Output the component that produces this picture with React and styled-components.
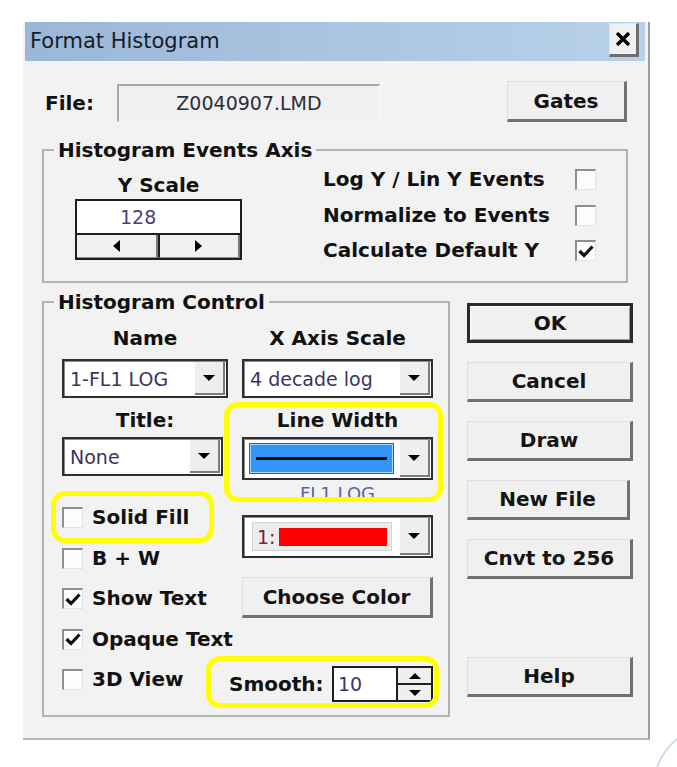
import React from 'react';
import styled, { createGlobalStyle, css } from 'styled-components';

const GlobalStyle = createGlobalStyle`
  html, body {
    margin: 0;
    padding: 0;
    background: #ffffff;
  }
  body {
    font-family: "DejaVu Sans", "Liberation Sans", sans-serif;
  }
  * {
    box-sizing: border-box;
  }
`;

const Page = styled.div`
  position: relative;
  width: 677px;
  height: 767px;
  overflow: hidden;
  padding: 22px 0 0 23px;
`;

const Window = styled.div`
  width: 627px;
  height: 718px;
  background: #f2f2f2;
  border-right: 2px solid #9c9c9c;
  border-bottom: 2px solid #b6b6b6;
`;

const TitleBar = styled.div`
  display: flex;
  align-items: flex-start;
  justify-content: space-between;
  margin-left: 2px;
  width: 620px;
  height: 39px;
  background: linear-gradient(90deg, #9bb7d7 0%, #adc7e3 60%, #b9d1ea 100%);
`;

const TitleText = styled.div`
  padding-left: 5px;
  font: 21px/39px "DejaVu Sans", sans-serif;
  color: #161c28;
`;

const CloseButton = styled.div`
  display: flex;
  align-items: center;
  justify-content: center;
  width: 30px;
  height: 34px;
  margin: 1px 6px 0 0;
  background: #f0f0f0;
  border-style: solid;
  border-width: 1px 3px 3px 1px;
  border-color: #e4e4e4 #6e6e6e #6e6e6e #e4e4e4;
`;

const Body = styled.div`
  padding-left: 19px;
`;

const FileRow = styled.div`
  display: flex;
  align-items: flex-end;
  margin-top: 20px;
  padding-left: 3px;
`;

const FieldLabel = styled.div`
  width: 72px;
  font: bold 20px/38px "DejaVu Sans", sans-serif;
  color: #111;
`;

const FileField = styled.div`
  width: 263px;
  height: 38px;
  background: #f0f0f0;
  border-style: solid;
  border-width: 2px 1px 1px 2px;
  border-color: #a9a9a9 #fafafa #fafafa #a9a9a9;
  text-align: center;
  font: 19px/34px "DejaVu Sans", sans-serif;
  color: #2c2c3c;
`;

const Button = styled.div`
  display: flex;
  align-items: center;
  justify-content: center;
  width: ${p => p.$w || 166}px;
  height: ${p => p.$h || 40}px;
  margin-left: ${p => p.$ml || 0}px;
  margin-top: ${p => p.$mt || 0}px;
  background: #f0f0f0;
  border-style: solid;
  border-width: 1px 3px 3px 1px;
  border-color: #dedede #707070 #707070 #dedede;
  font: bold 20px "DejaVu Sans", sans-serif;
  color: #141414;
  white-space: nowrap;
  ${p => p.$default && css`
    border: 3px solid #2b2b2b;
    box-shadow: inset 1px 1px 0 #ffffff, inset -1px -1px 0 #9a9a9a;
  `}
`;

const Group = styled.fieldset`
  margin: ${p => p.$mt || 0}px 0 0 0;
  padding: ${p => p.$pt}px 0 ${p => p.$pb}px 0;
  width: ${p => p.$w}px;
  min-width: 0;
  border: 2px solid #b3b3b3;
`;

const Legend = styled.legend`
  margin-left: 10px;
  padding: 0 4px;
  font: bold 20px/24px "DejaVu Sans", sans-serif;
  color: #111;
`;

const EventsBody = styled.div`
  display: flex;
  align-items: flex-start;
`;

const YColumn = styled.div`
  display: flex;
  flex-direction: column;
  align-items: center;
  width: 167px;
  margin: 5px 0 0 31px;
`;

const Caption = styled.div`
  margin-top: ${p => p.$mt || 0}px;
  text-align: center;
  font: bold 20px/24px "DejaVu Sans", sans-serif;
  color: #111;
`;

const ScrollSpin = styled.div`
  display: flex;
  flex-direction: column;
  width: 167px;
  height: 61px;
  margin-top: 2px;
  background: #fff;
  border: 2px solid #1e1e1e;
`;

const ScrollValue = styled.div`
  height: 34px;
  padding-left: 43px;
  border-bottom: 2px solid #1e1e1e;
  font: 19px/32px "DejaVu Sans", sans-serif;
  color: #4a3f7e;
`;

const ScrollRow = styled.div`
  display: flex;
  flex: 1;
`;

const ScrollButton = styled.div`
  display: flex;
  flex: 1;
  align-items: center;
  justify-content: center;
  background: #f0f0f0;
  border-right: 2px solid #7a7a7a;
  border-bottom: 1px solid #8a8a8a;
  & + & {
    border-left: 2px solid #1e1e1e;
  }
`;

const Arrow = styled.span`
  width: 0;
  height: 0;
  border-style: solid;
  border-color: transparent;
  ${p => p.$dir === 'left' && css`
    border-width: 6px 7px 6px 0;
    border-right-color: #000;
  `}
  ${p => p.$dir === 'right' && css`
    border-width: 6px 0 6px 7px;
    border-left-color: #000;
  `}
  ${p => p.$dir === 'up' && css`
    border-width: 0 6px 6px 6px;
    border-bottom-color: #000;
  `}
  ${p => p.$dir === 'down' && css`
    border-width: 6px 6px 0 6px;
    border-top-color: #000;
  `}
`;

const OptionGrid = styled.div`
  display: grid;
  grid-template-columns: 252px 21px;
  row-gap: 14.5px;
  align-items: center;
  margin: 1px 0 0 81px;
`;

const OptionLabel = styled.div`
  font: bold 20px/21px "DejaVu Sans", sans-serif;
  color: #111;
  white-space: nowrap;
`;

const Box = styled.div`
  display: flex;
  align-items: center;
  justify-content: center;
  flex: none;
  width: 21px;
  height: 21px;
  background: #fcfcfc;
  border-style: solid;
  border-width: 2px 1px 1px 2px;
  border-color: #8e8e8e #e2e2e2 #e2e2e2 #8e8e8e;
`;

const LowerRow = styled.div`
  display: flex;
  align-items: stretch;
  margin-top: 7px;
`;

const ControlBody = styled.div`
  display: flex;
  gap: 14px;
  padding-left: 18px;
`;

const Column = styled.div`
  display: flex;
  flex-direction: column;
  width: ${p => p.$w}px;
`;

const Combo = styled.div`
  display: flex;
  align-items: stretch;
  width: ${p => p.$w}px;
  height: ${p => p.$h || 39}px;
  margin-top: ${p => p.$mt || 0}px;
  background: #fff;
  border: 2px solid #2f2f2f;
  box-shadow: inset 1px 1px 0 #8c8c8c;
`;

const ComboValue = styled.div`
  display: flex;
  flex: 1;
  align-items: center;
  padding-left: 6px;
  overflow: hidden;
  white-space: nowrap;
  font: 19px "DejaVu Sans", sans-serif;
  color: #3b3563;
`;

const DropButton = styled.div`
  display: flex;
  align-items: center;
  justify-content: center;
  width: 30px;
  margin: 1px;
  background: #eeeeee;
  border-right: 2px solid #7c7c7c;
  border-bottom: 2px solid #7c7c7c;
`;

const LineSwatch = styled.div`
  display: flex;
  flex: 1;
  align-items: center;
  margin: 4px 5px 4px 5px;
  padding: 0 6px;
  background: #3395f6;
  border: 1px solid #1c63c0;
  box-shadow: inset 0 0 0 1px #a6d3ff;
`;

const LineStroke = styled.div`
  flex: 1;
  height: 3px;
  background: #0b0b0b;
`;

const ColorField = styled.div`
  display: flex;
  flex: 1;
  align-items: center;
  gap: 3px;
  margin: 5px 7px 5px 8px;
  padding: 0 4px;
  background: #ececec;
  border: 1px solid #d4d4d4;
  font: 19px "DejaVu Sans", sans-serif;
  color: #7a2040;
`;

const ColorBar = styled.div`
  flex: 1;
  height: 18px;
  background: #ff0000;
`;

const ClippedNote = styled.div`
  height: 10px;
  margin-top: 7px;
  overflow: hidden;
  text-align: center;
  font: 18px/13px "DejaVu Sans", sans-serif;
  color: #5b63a6;
`;

const Highlight = styled.div`
  position: relative;
  margin-top: ${p => p.$mt || 0}px;
  margin-left: ${p => p.$ml || 0}px;
  &::after {
    content: '';
    position: absolute;
    inset: ${p => p.$inset};
    border: 5px solid #ffff00;
    border-radius: 14px;
    pointer-events: none;
  }
`;

const CheckList = styled.div`
  display: flex;
  flex-direction: column;
  gap: 19.5px;
  margin-top: 31px;
`;

const CheckRow = styled.div`
  display: flex;
  align-items: center;
  gap: 9px;
  height: 21px;
`;

const SmoothRow = styled.div`
  display: flex;
  align-items: center;
  justify-content: space-between;
  width: 204px;
  height: 36px;
`;

const SmoothSpin = styled.div`
  display: flex;
  width: 101px;
  height: 36px;
  background: #fff;
  border: 2px solid #1f1f1f;
`;

const SpinText = styled.div`
  flex: 1;
  padding-left: 4px;
  font: 19px/32px "DejaVu Sans", sans-serif;
  color: #3d3470;
`;

const SpinButtons = styled.div`
  display: flex;
  flex-direction: column;
  width: 35px;
  border-left: 2px solid #1f1f1f;
`;

const SpinButton = styled.div`
  display: flex;
  flex: 1;
  align-items: center;
  justify-content: center;
  background: #efefef;
  & + & {
    border-top: 2px solid #1f1f1f;
  }
`;

const ButtonColumn = styled.div`
  display: flex;
  flex-direction: column;
  gap: 19px;
  margin-left: 17px;
  padding: 13px 0 20px;
`;

const Spacer = styled.div`
  flex: 1;
`;

const Swoosh = styled.svg`
  position: absolute;
  right: 0;
  bottom: 0;
`;

const Check = () => (
  <svg width="16" height="15" viewBox="0 0 16 15">
    <polyline points="1.5,7 6,11.5 14.5,2.5" fill="none" stroke="#111" strokeWidth="3.2" />
  </svg>
);

const Checkbox = ({ checked }) => <Box>{checked && <Check />}</Box>;

const Option = ({ label, checked }) => (
  <CheckRow>
    <Checkbox checked={checked} />
    <OptionLabel>{label}</OptionLabel>
  </CheckRow>
);

const Dropdown = ({ w, h, mt, children }) => (
  <Combo $w={w} $h={h} $mt={mt}>
    {children}
    <DropButton>
      <Arrow $dir="down" />
    </DropButton>
  </Combo>
);

const App = () => (
  <Page>
    <GlobalStyle />
    <Window>
      <TitleBar>
        <TitleText>Format Histogram</TitleText>
        <CloseButton>
          <svg width="16" height="14" viewBox="0 0 16 14">
            <path d="M2 1 L14 13 M14 1 L2 13" stroke="#000" strokeWidth="3.4" />
          </svg>
        </CloseButton>
      </TitleBar>

      <Body>
        <FileRow>
          <FieldLabel>File:</FieldLabel>
          <FileField>Z0040907.LMD</FileField>
          <Button $w={120} $h={41} $ml={127}>Gates</Button>
        </FileRow>

        <Group $w={586} $mt={16} $pt={6} $pb={20}>
          <Legend>Histogram Events Axis</Legend>
          <EventsBody>
            <YColumn>
              <Caption>Y Scale</Caption>
              <ScrollSpin>
                <ScrollValue>128</ScrollValue>
                <ScrollRow>
                  <ScrollButton><Arrow $dir="left" /></ScrollButton>
                  <ScrollButton><Arrow $dir="right" /></ScrollButton>
                </ScrollRow>
              </ScrollSpin>
            </YColumn>
            <OptionGrid>
              <OptionLabel>Log Y / Lin Y Events</OptionLabel>
              <Checkbox />
              <OptionLabel>Normalize to Events</OptionLabel>
              <Checkbox />
              <OptionLabel>Calculate Default Y</OptionLabel>
              <Checkbox checked />
            </OptionGrid>
          </EventsBody>
        </Group>

        <LowerRow>
          <Group $w={408} $pt={12} $pb={13}>
            <Legend>Histogram Control</Legend>
            <ControlBody>
              <Column $w={166}>
                <Caption>Name</Caption>
                <Dropdown w={166} mt={9}>
                  <ComboValue>1-FL1 LOG</ComboValue>
                </Dropdown>
                <Caption $mt={10}>Title:</Caption>
                <Dropdown w={161} mt={5}>
                  <ComboValue>None</ComboValue>
                </Dropdown>
                <CheckList>
                  <Highlight $inset="-16px 14px -15px -11px">
                    <Option label="Solid Fill" />
                  </Highlight>
                  <Option label="B + W" />
                  <Option label="Show Text" checked />
                  <Option label="Opaque Text" checked />
                  <Option label="3D View" />
                </CheckList>
              </Column>

              <Column $w={191}>
                <Caption>X Axis Scale</Caption>
                <Dropdown w={191} mt={9}>
                  <ComboValue>4 decade log</ComboValue>
                </Dropdown>
                <Highlight $inset="4px -10px -5px -18px">
                  <Caption $mt={10}>Line Width</Caption>
                  <Dropdown w={191} h={43} mt={5}>
                    <LineSwatch>
                      <LineStroke />
                    </LineSwatch>
                  </Dropdown>
                  <ClippedNote>FL1 LOG</ClippedNote>
                </Highlight>
                <Dropdown w={191} h={43} mt={18}>
                  <ColorField>
                    1:
                    <ColorBar />
                  </ColorField>
                </Dropdown>
                <Button $w={191} $h={41} $mt={19}>Choose Color</Button>
                <Highlight $mt={48} $ml={-13} $inset="-10px -6px -6px -23px">
                  <SmoothRow>
                    <OptionLabel>Smooth:</OptionLabel>
                    <SmoothSpin>
                      <SpinText>10</SpinText>
                      <SpinButtons>
                        <SpinButton><Arrow $dir="up" /></SpinButton>
                        <SpinButton><Arrow $dir="down" /></SpinButton>
                      </SpinButtons>
                    </SmoothSpin>
                  </SmoothRow>
                </Highlight>
              </Column>
            </ControlBody>
          </Group>

          <ButtonColumn>
            <Button $default>OK</Button>
            <Button>Cancel</Button>
            <Button>Draw</Button>
            <Button $w={163}>New File</Button>
            <Button>Cnvt to 256</Button>
            <Spacer />
            <Button>Help</Button>
          </ButtonColumn>
        </LowerRow>
      </Body>
    </Window>
    <Swoosh width="24" height="34" viewBox="0 0 24 34">
      <path d="M4 34 Q10 18 24 6" fill="none" stroke="#cfdcef" strokeWidth="2" />
    </Swoosh>
  </Page>
);

export default App;
